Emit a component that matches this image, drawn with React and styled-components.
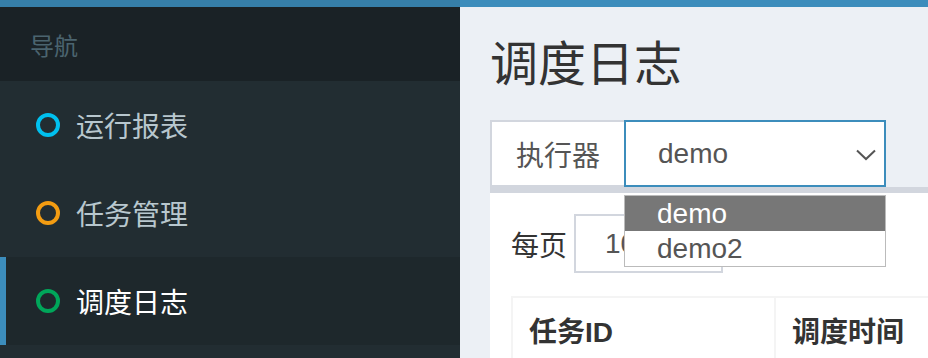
import React from "react";
import styled, { createGlobalStyle } from "styled-components";

const GlobalStyle = createGlobalStyle`
  html, body {
    margin: 0;
    padding: 0;
    background: #ecf0f5;
    overflow: hidden;
  }
  * {
    box-sizing: border-box;
  }
  body {
    font-family: "Liberation Sans", "Noto Sans CJK SC", sans-serif;
  }
`;

const Page = styled.div`
  width: 928px;
  height: 358px;
  display: grid;
  grid-template-columns: 460px 1fr;
  grid-template-rows: 7px 1fr;
  overflow: hidden;
`;

const TopStrip = styled.div`
  background: ${(p) => (p.$dark ? "#367fa9" : "#3c8dbc")};
`;

const Sidebar = styled.aside`
  background: #222d32;
  display: flex;
  flex-direction: column;
`;

const SidebarHeader = styled.div`
  height: 74px;
  background: #1a2226;
  color: #4b646f;
  font-size: 24px;
  display: flex;
  align-items: center;
  padding-left: 30px;
`;

const MenuItem = styled.div`
  height: 88px;
  display: flex;
  align-items: center;
  gap: 16px;
  padding-left: ${(p) => (p.$active ? "30px" : "36px")};
  border-left: ${(p) => (p.$active ? "6px solid #3c8dbc" : "none")};
  background: ${(p) => (p.$active ? "#1e282c" : "transparent")};
  color: ${(p) => (p.$active ? "#ffffff" : "#b8c7ce")};
  font-size: 28px;
`;

const Ring = styled.span`
  width: 24px;
  height: 24px;
  border-radius: 50%;
  border: 4px solid ${(p) => p.$color};
  flex: none;
`;

const Content = styled.main`
  padding-left: 30px;
  display: flex;
  flex-direction: column;
`;

const Title = styled.h1`
  margin: 34px 0 0;
  font-size: 48px;
  line-height: 48px;
  font-weight: 400;
  color: #333;
`;

const InputGroup = styled.div`
  margin-top: 31px;
  display: flex;
  height: 67px;
`;

const Addon = styled.div`
  width: 134px;
  background: #fff;
  border: 2px solid #d2d6de;
  border-right: none;
  display: flex;
  align-items: center;
  padding-left: 24px;
  font-size: 28px;
  color: #555;
`;

const SelectWrap = styled.div`
  position: relative;
  width: 262px;
  background: #fff;
  border: 2px solid #3c8dbc;
  display: flex;
  align-items: center;
  justify-content: space-between;
  padding: 0 8px 0 32px;
  font-size: 28px;
  color: #555;
`;

const Chevron = styled.svg`
  width: 20px;
  height: 12px;
  margin-top: 2px;
`;

const Dropdown = styled.ul`
  position: absolute;
  top: calc(100% + 10px);
  left: -2px;
  width: 262px;
  margin: 0;
  padding: 0;
  list-style: none;
  background: #fff;
  border: 1px solid #bbb;
  z-index: 2;
`;

const Option = styled.li`
  height: 35px;
  line-height: 35px;
  padding-left: 32px;
  font-size: 28px;
  background: ${(p) => (p.$selected ? "#777" : "#fff")};
  color: ${(p) => (p.$selected ? "#fff" : "#555")};
`;

const Box = styled.section`
  flex: 1;
  background: #fff;
  border-top: 6px solid #d2d6de;
  padding: 21px 0 0 21px;
`;

const LengthRow = styled.div`
  display: flex;
  align-items: center;
  gap: 7px;
  font-size: 28px;
  color: #333;
`;

const LengthSelect = styled.div`
  width: 149px;
  height: 59px;
  border: 2px solid #d2d6de;
  display: flex;
  align-items: center;
  padding-left: 29px;
  color: #555;
`;

const Table = styled.table`
  margin-top: 23px;
  border-collapse: collapse;
  border: 2px solid #f4f4f4;
  width: 600px;
`;

const Th = styled.th`
  width: ${(p) => p.$width || "auto"};
  border: 2px solid #f4f4f4;
  padding: 15px 16px;
  text-align: left;
  font-size: 28px;
  line-height: 40px;
  font-weight: 700;
  color: #333;
`;

const menu = [
  { label: "运行报表", color: "#00c0ef" },
  { label: "任务管理", color: "#f39c12" },
  { label: "调度日志", color: "#00a65a", active: true },
];

export default function App() {
  return (
    <Page>
      <GlobalStyle />
      <TopStrip $dark />
      <TopStrip />
      <Sidebar>
        <SidebarHeader>导航</SidebarHeader>
        {menu.map((m) => (
          <MenuItem key={m.label} $active={m.active}>
            <Ring $color={m.color} />
            {m.label}
          </MenuItem>
        ))}
      </Sidebar>
      <Content>
        <Title>调度日志</Title>
        <InputGroup>
          <Addon>执行器</Addon>
          <SelectWrap>
            demo
            <Chevron viewBox="0 0 20 12" fill="none" stroke="#555" strokeWidth="2">
              <path d="M1 1.5 L10 10 L19 1.5" />
            </Chevron>
            <Dropdown>
              <Option $selected>demo</Option>
              <Option>demo2</Option>
            </Dropdown>
          </SelectWrap>
        </InputGroup>
        <Box>
          <LengthRow>
            每页
            <LengthSelect>10</LengthSelect>
          </LengthRow>
          <Table>
            <thead>
              <tr>
                <Th $width="263px">任务ID</Th>
                <Th>调度时间</Th>
              </tr>
            </thead>
          </Table>
        </Box>
      </Content>
    </Page>
  );
}
